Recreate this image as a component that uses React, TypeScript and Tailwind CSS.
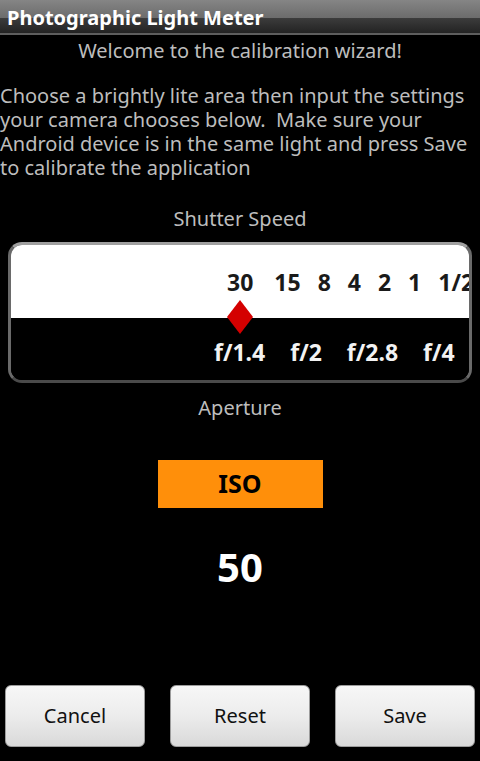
import React from 'react';

const shutterSpeeds = ['30', '15', '8', '4', '2', '1', '1/2'];
const apertures = ['f/1.4', 'f/2', 'f/2.8', 'f/4'];

const CalibrationScale: React.FC = () => {
  return (
    <div className="relative mx-[8px] h-[141px] rounded-[14px] border-[3px] border-t-[#a0a0a0] border-x-[#6a6a6a] border-b-[#4a4a4a] overflow-hidden bg-black">
      {/* shutter speed half - the last value runs off the edge like the real dial */}
      <div className="h-[73px] bg-white flex items-center pl-[216px] gap-[17px] pt-[2px] whitespace-nowrap text-[23px] font-bold text-[#1a1a1a] leading-none">
        {shutterSpeeds.map((s, i) => (
          <span key={s} className={i === 0 ? 'mr-[4px]' : ''}>
            {s}
          </span>
        ))}
      </div>
      {/* aperture half */}
      <div className="h-[62px] bg-black flex items-center pl-[203px] gap-[25px] pt-[6px] whitespace-nowrap text-[23px] font-bold text-[#f2f2f2] leading-none">
        {apertures.map((a) => (
          <span key={a}>{a}</span>
        ))}
      </div>
      {/* red marker */}
      <svg className="absolute left-[216px] top-[55px]" width="26" height="34" viewBox="0 0 26 34">
        <polygon points="13,0 26,17 13,34 0,17" fill="#d40000" />
      </svg>
    </div>
  );
};

const WizardButton: React.FC<{ label: string }> = ({ label }) => (
  <button className="w-[140px] h-[62px] rounded-[6px] border border-[#9c9c9c] bg-gradient-to-b from-[#f7f7f7] via-[#ececec] to-[#d9d9d9] text-[20px] text-[#111]">
    {label}
  </button>
);

export default function App() {
  return (
    <div
      className="w-[480px] h-[761px] bg-black flex flex-col overflow-hidden"
      style={{ fontFamily: '"Noto Sans", "Open Sans", sans-serif' }}
    >
      {/* title bar */}
      <div className="h-[35px] flex flex-col shrink-0">
        <div className="h-[18px] bg-gradient-to-b from-[#858585] to-[#6c6c6c]" />
        <div className="h-[15px] bg-gradient-to-b from-[#3c3c3c] to-[#232323]" />
        <div className="h-[2px] bg-[#5e5e5e]" />
      </div>
      <div className="-mt-[35px] h-[35px] flex items-center pl-[7px] text-white font-bold text-[20px] leading-none">
        Photographic Light Meter
      </div>

      <p className="mt-[4px] text-center text-[20px] leading-[24px] text-[#bdbdbd]">
        Welcome to the calibration wizard!
      </p>

      <p className="mt-[21px] text-[20px] leading-[24px] text-[#bdbdbd] pr-[10px]">
        Choose a brightly lite area then input the settings your camera chooses below.&nbsp; Make sure your
        Android device is in the same light and press Save to calibrate the application
      </p>

      <p className="mt-[27px] text-center text-[20px] leading-[24px] text-[#bdbdbd]">Shutter Speed</p>

      <div className="mt-[11px]">
        <CalibrationScale />
      </div>

      <p className="mt-[13px] text-center text-[20px] leading-[24px] text-[#bdbdbd]">Aperture</p>

      <div className="mt-[40px] mx-auto w-[165px] h-[48px] bg-[#ff8f0a] flex items-center justify-center text-[25px] font-bold text-black">
        ISO
      </div>

      <p className="mt-[37px] text-center text-[40px] leading-[44px] font-bold text-white">50</p>

      <div className="mt-auto mb-[14px] flex justify-between px-[5px]">
        <WizardButton label="Cancel" />
        <WizardButton label="Reset" />
        <WizardButton label="Save" />
      </div>
    </div>
  );
}
